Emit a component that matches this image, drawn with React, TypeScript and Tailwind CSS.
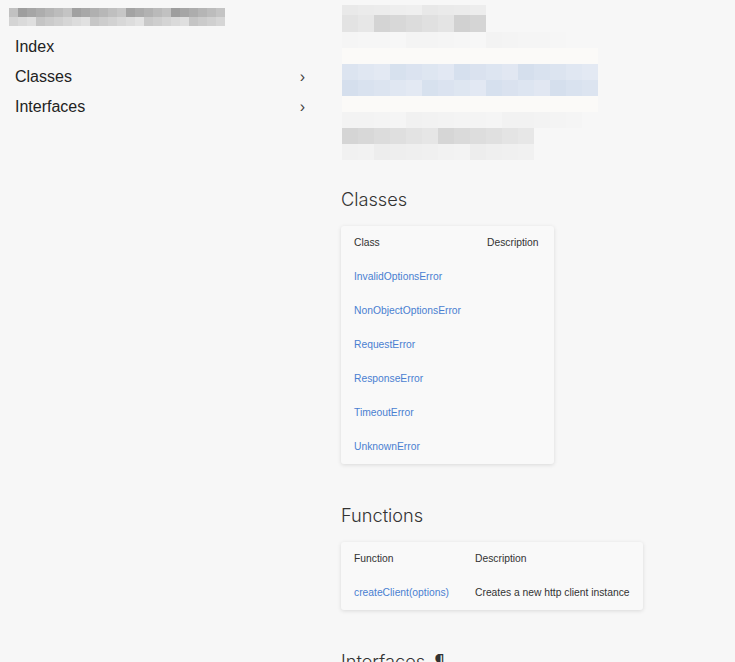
import React from "react";

type Band = { h: number; cells: string[] };

// pixelated (redacted) blocks, shades taken from the screenshot
const shade = (base: number, spread: number, n: number, seed: number) =>
  Array.from({ length: n }, (_, i) => {
    const v = Math.round(base + ((((i + 1) * 37 + seed * 11) % 17) / 16 - 0.5) * spread);
    return `rgb(${v},${v},${v})`;
  });

const blue = (n: number, seed: number) =>
  Array.from({ length: n }, (_, i) => {
    const d = (((i + 1) * 29 + seed * 7) % 13) / 12 - 0.5;
    return `rgb(${Math.round(220 + d * 14)},${Math.round(228 + d * 10)},${Math.round(240 + d * 6)})`;
  });

const titleBands: Band[] = [
  { h: 9, cells: shade(178, 40, 24, 1) },
  { h: 9, cells: shade(212, 30, 24, 2) },
];

const headBands: Band[] = [
  { h: 10, cells: shade(236, 8, 9, 3) },
  { h: 17, cells: shade(220, 22, 9, 4) },
  { h: 16, cells: shade(245, 4, 15, 5) },
  { h: 16, cells: Array(16).fill("#fbfaf8") },
  { h: 16, cells: blue(16, 6) },
  { h: 16, cells: blue(16, 7) },
  { h: 16, cells: Array(16).fill("#fbfaf8") },
  { h: 16, cells: shade(243, 4, 15, 8) },
  { h: 16, cells: shade(222, 18, 12, 9) },
  { h: 16, cells: shade(240, 6, 12, 10) },
];

function Pixels({ bands, cell }: { bands: Band[]; cell: number }) {
  return (
    <div className="flex flex-col items-start">
      {bands.map((b, r) => (
        <div key={r} className="flex flex-row">
          {b.cells.map((c, i) => (
            <div key={i} style={{ width: cell, height: b.h, backgroundColor: c }} />
          ))}
        </div>
      ))}
    </div>
  );
}

const classes = [
  "InvalidOptionsError",
  "NonObjectOptionsError",
  "RequestError",
  "ResponseError",
  "TimeoutError",
  "UnknownError",
];

const navItems = [
  { label: "Index", more: false },
  { label: "Classes", more: true },
  { label: "Interfaces", more: true },
];

const headingFont = { fontFamily: 'Inter, "Liberation Sans", sans-serif' };

export default function App() {
  return (
    <div
      className="w-full h-[662px] overflow-hidden bg-[#f7f7f7] text-[#222] flex flex-row"
      style={{ fontFamily: '"Liberation Sans", Arial, sans-serif' }}
    >
      <aside className="w-[341px] shrink-0 pt-[8px] pr-[36px]">
        <div className="pl-[9px]">
          <Pixels bands={titleBands} cell={9} />
        </div>
        <nav className="mt-[6px] flex flex-col">
          {navItems.map((item) => (
            <div
              key={item.label}
              className="h-[30px] pl-[15px] flex flex-row justify-between items-center text-[16px]"
            >
              <span>{item.label}</span>
              {item.more && <span className="text-[16px] leading-none text-[#444]">›</span>}
            </div>
          ))}
        </nav>
      </aside>

      <main className="flex-grow pt-[5px]">
        <div className="pl-[1px]">
          <Pixels bands={headBands} cell={16} />
        </div>

        <h2 className="mt-[27px] text-[18.2px] leading-[24px] font-light text-[#333]" style={headingFont}>
          Classes
        </h2>
        <div className="mt-[15px] w-fit bg-[#f9f9f9] rounded-[3px] shadow-[0_1px_4px_rgba(0,0,0,0.12)]">
          <table className="border-collapse text-[10.3px]">
            <thead>
              <tr className="h-[34px] text-left">
                <th className="font-normal px-[13px] text-[#333]">Class</th>
                <th className="font-normal pl-[13px] pr-[15px] text-[#333]">Description</th>
              </tr>
            </thead>
            <tbody>
              {classes.map((c) => (
                <tr key={c} className="h-[34px]">
                  <td className="px-[13px] text-[#4a7fd1]">{c}</td>
                  <td className="pl-[13px] pr-[15px]" />
                </tr>
              ))}
            </tbody>
          </table>
        </div>

        <h2 className="mt-[39px] text-[18.2px] leading-[24px] font-light text-[#333]" style={headingFont}>
          Functions
        </h2>
        <div className="mt-[15px] w-fit bg-[#f9f9f9] rounded-[3px] shadow-[0_1px_4px_rgba(0,0,0,0.12)]">
          <table className="border-collapse text-[10.3px]">
            <thead>
              <tr className="h-[34px] text-left">
                <th className="font-normal px-[13px] text-[#333]">Function</th>
                <th className="font-normal px-[13px] text-[#333]">Description</th>
              </tr>
            </thead>
            <tbody>
              <tr className="h-[34px]">
                <td className="px-[13px] text-[#4a7fd1]">createClient(options)</td>
                <td className="px-[13px] text-[#333]">Creates a new http client instance</td>
              </tr>
            </tbody>
          </table>
        </div>

        <h2 className="mt-[39px] text-[18.2px] leading-[24px] font-light text-[#333]" style={headingFont}>
          Interfaces <span className="ml-[4px]">¶</span>
        </h2>
      </main>
    </div>
  );
}
